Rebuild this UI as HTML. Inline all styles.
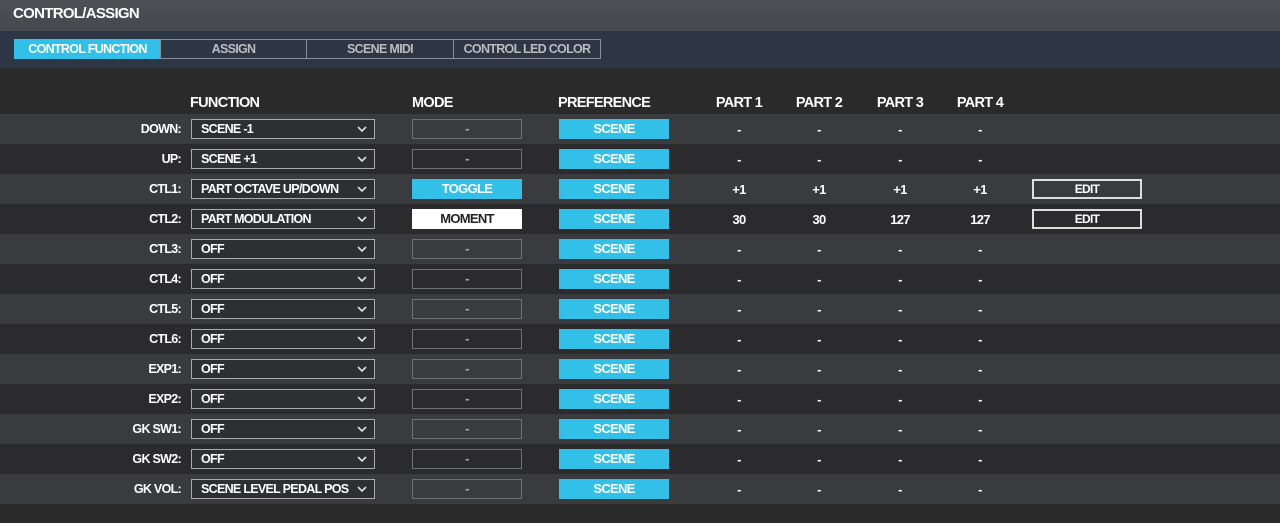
<!DOCTYPE html><html><head><style>
*{margin:0;padding:0;box-sizing:border-box}
body{width:1280px;height:523px;background:#2a2a2a;font-family:"Liberation Sans",sans-serif;font-weight:bold;color:#fff;position:relative;overflow:hidden;font-size:13px;letter-spacing:-0.7px}
.top{position:absolute;left:0;top:0;width:1280px;height:31px;background:linear-gradient(#4d5054,#45484c)}
.top span{position:absolute;left:13px;top:5px;font-size:15px}
.tabs{position:absolute;left:0;top:31px;width:1280px;height:37px;background:#2d3645}
.tab{position:absolute;top:8px;height:20px;border:1px solid #8a8e94;color:#b9bcc0;text-align:center;line-height:18px;font-size:12.5px}
.tab.on{background:#33c0e8;color:#fff;border-color:#33c0e8}
.hd{position:absolute;top:95px;font-size:14.5px}
.row{position:absolute;left:0;width:1280px;height:30px}
.row.a{background:#3a3b3f}.row.b{background:#2b2b2d}
.lab{position:absolute;right:1099px;top:8px;font-size:12.5px;text-align:right}
.sel{position:absolute;left:191px;top:5px;width:184px;height:20px;border:1px solid #aaa;background:#2e2f32;padding-left:9px;line-height:18px;font-size:12.5px}
.sel svg{position:absolute;right:7px;top:6px}
.mode{position:absolute;left:412px;top:5px;width:110px;height:20px;border:1px solid #6e6f72;text-align:center;line-height:18px;color:#aaa}
.mode.t{background:#33c0e8;border-color:#33c0e8;color:#fff}
.mode.m{background:#fff;border-color:#fff;color:#222}
.pref{position:absolute;left:559px;top:5px;width:110px;height:20px;background:#33c0e8;text-align:center;line-height:20px}
.p{position:absolute;top:8px;width:60px;text-align:center;font-size:13px}
.edit{position:absolute;left:1032px;top:5px;width:110px;height:20px;border:2px solid #ddd;text-align:center;line-height:16px;font-size:12px}
</style></head><body>
<div class="top"><span>CONTROL/ASSIGN</span></div>
<div class="tabs">
<div class="tab on" style="left:14px;width:147px">CONTROL FUNCTION</div>
<div class="tab" style="left:160px;width:147px">ASSIGN</div>
<div class="tab" style="left:306px;width:148px">SCENE MIDI</div>
<div class="tab" style="left:453px;width:148px">CONTROL LED COLOR</div>
</div>
<div class="hd" style="left:190px">FUNCTION</div>
<div class="hd" style="left:412px">MODE</div>
<div class="hd" style="left:558px">PREFERENCE</div>
<div class="hd" style="left:709px;width:60px;text-align:center">PART 1</div>
<div class="hd" style="left:789px;width:60px;text-align:center">PART 2</div>
<div class="hd" style="left:870px;width:60px;text-align:center">PART 3</div>
<div class="hd" style="left:950px;width:60px;text-align:center">PART 4</div>
<div id="rows"></div>
<script>
var d=[["DOWN:","SCENE -1","-",["-","-","-","-"]],["UP:","SCENE +1","-",["-","-","-","-"]],["CTL1:","PART OCTAVE UP/DOWN","TOGGLE",["+1","+1","+1","+1"],1],["CTL2:","PART MODULATION","MOMENT",["30","30","127","127"],1],["CTL3:","OFF"],["CTL4:","OFF"],["CTL5:","OFF"],["CTL6:","OFF"],["EXP1:","OFF"],["EXP2:","OFF"],["GK SW1:","OFF"],["GK SW2:","OFF"],["GK VOL:","SCENE LEVEL PEDAL POS"]];
var h="";var px=[709,789,870,950];
d.forEach(function(r,i){var m=r[2]||"-",p=r[3]||["-","-","-","-"];
var mc=m=="TOGGLE"?" t":m=="MOMENT"?" m":"";
h+='<div class="row '+(i%2?'b':'a')+'" style="top:'+(114+i*30)+'px"><div class="lab">'+r[0]+'</div><div class="sel">'+r[1]+'<svg width="10" height="7" viewBox="0 0 10 7"><path d="M1 1L5 5L9 1" stroke="#ddd" stroke-width="1.6" fill="none"/></svg></div><div class="mode'+mc+'">'+m+'</div><div class="pref">SCENE</div>';
p.forEach(function(v,j){h+='<div class="p" style="left:'+px[j]+'px">'+v+'</div>'});
if(r[4])h+='<div class="edit">EDIT</div>';h+='</div>'});
document.getElementById("rows").innerHTML=h;
</script>
</body></html>
